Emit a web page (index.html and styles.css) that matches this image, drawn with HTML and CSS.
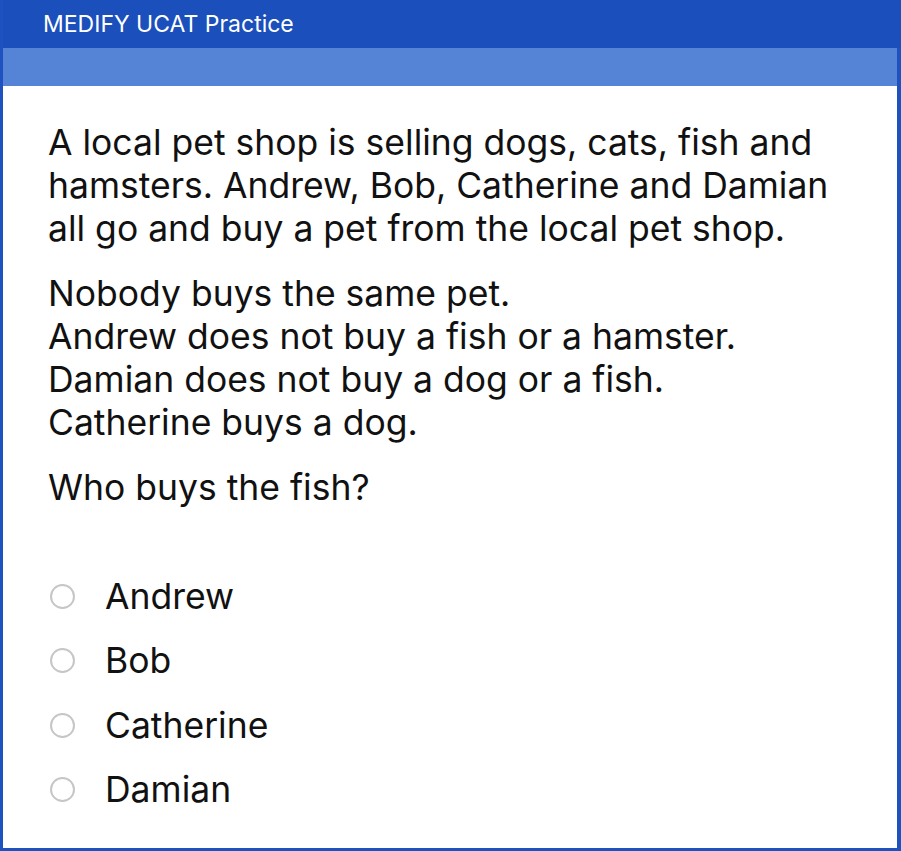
FILE: index.html
```html
<!DOCTYPE html>
<html>
<head>
<meta charset="utf-8">
<link rel="stylesheet" href="styles.css">
</head>
<body>
<div class="frame">
  <header class="topbar">MEDIFY UCAT Practice</header>
  <div class="band"></div>
  <main class="content">
    <p class="para">A local pet shop is selling dogs, cats, fish and hamsters. Andrew, Bob, Catherine and Damian all go and buy a pet from the local pet shop.</p>
    <p class="para">Nobody buys the same pet.<br>Andrew does not buy a fish or a hamster.<br>Damian does not buy a dog or a fish.<br>Catherine buys a dog.</p>
    <p class="para">Who buys the fish?</p>
    <ul class="options">
      <li class="option"><span class="radio"></span><span class="label">Andrew</span></li>
      <li class="option"><span class="radio"></span><span class="label">Bob</span></li>
      <li class="option"><span class="radio"></span><span class="label">Catherine</span></li>
      <li class="option"><span class="radio"></span><span class="label">Damian</span></li>
    </ul>
  </main>
</div>
</body>
</html>
```
FILE: styles.css
```css
html, body {
  margin: 0;
  padding: 0;
  background: #ffffff;
}
.frame {
  width: 901px;
  height: 851px;
  box-sizing: border-box;
  border-left: 3px solid #1e52c0;
  border-bottom: 3px solid #1e52c0;
  display: flex;
  flex-direction: column;
  overflow: hidden;
}
.topbar {
  height: 48px;
  background: #1b4fbb;
  color: #ffffff;
  font-family: "Inter", sans-serif;
  font-size: 23px;
  line-height: 48px;
  padding-left: 40px;
}
.band {
  height: 38px;
  background: #5583d6;
  border-right: 4px solid #1e52c0;
}
.content {
  flex: 1;
  border-right: 4px solid #1e52c0;
  padding: 35px 40px 0 45px;
  font-family: "Inter", sans-serif;
  font-size: 35.5px;
  line-height: 43px;
  color: #111111;
}
.para {
  margin: 0 0 22px 0;
}
.options {
  list-style: none;
  margin: 65px 0 0 0;
  padding: 0;
  display: flex;
  flex-direction: column;
  gap: 20.5px;
}
.option {
  display: flex;
  align-items: center;
  height: 44px;
}
.radio {
  width: 21px;
  height: 21px;
  border: 2px solid #c6c6c6;
  border-radius: 50%;
  margin-left: 2px;
  margin-right: 30px;
  flex: none;
}
```
